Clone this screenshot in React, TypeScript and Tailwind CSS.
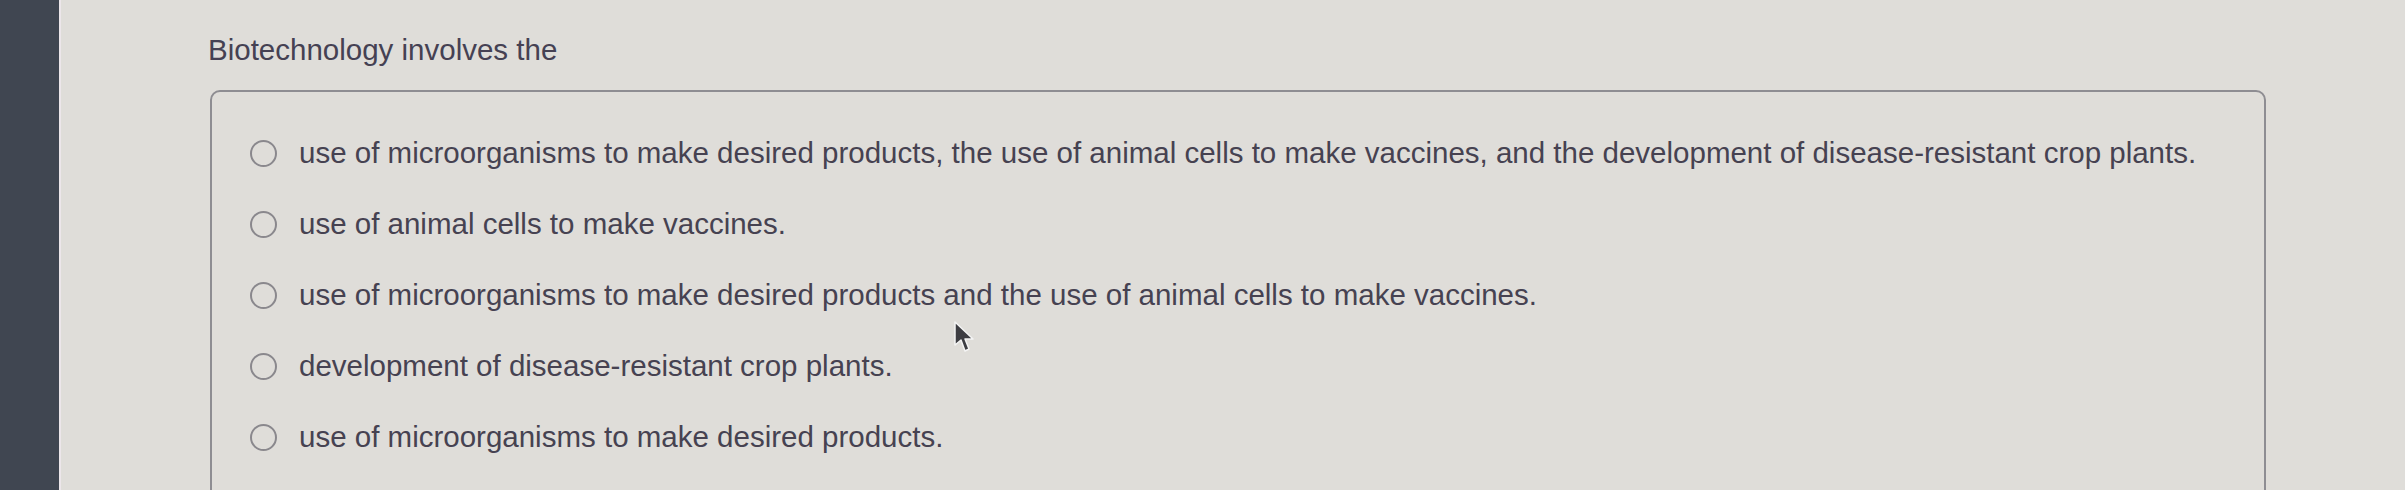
import React from 'react';

const options = [
  'use of microorganisms to make desired products, the use of animal cells to make vaccines, and the development of disease-resistant crop plants.',
  'use of animal cells to make vaccines.',
  'use of microorganisms to make desired products and the use of animal cells to make vaccines.',
  'development of disease-resistant crop plants.',
  'use of microorganisms to make desired products.',
];

export default function App() {
  return (
    <div
      className="relative flex h-[490px] w-[2405px] overflow-hidden bg-[#dfddd9]"
      style={{ fontFamily: '"Liberation Sans", Arial, sans-serif' }}
    >
      {/* dark side strip */}
      <div className="w-[61px] shrink-0 bg-[#404651] border-r-2 border-[#ece6ea]" />

      {/* question */}
      <div className="flex-1 pl-[147px] pt-[35px]">
        <h2 className="text-[29.5px] leading-none text-[#454153]">Biotechnology involves the</h2>

        <div className="mt-[25px] ml-[2px] w-[2056px] h-[500px] rounded-[10px] border-2 border-[#8e8d92] pt-[26px]">
          {options.map((opt) => (
            <label key={opt} className="flex h-[71px] items-center pl-[38px] cursor-pointer">
              <span className="h-[27px] w-[27px] shrink-0 rounded-full border-2 border-[#8a888d]" />
              <span className="ml-[22px] text-[29.5px] leading-none text-[#464251]">{opt}</span>
            </label>
          ))}
        </div>
      </div>

      {/* mouse pointer */}
      <svg className="absolute left-[953px] top-[320px]" width="24" height="34" viewBox="0 0 24 34">
        <path
          d="M2 2 L2 25 L8 20 L12 31 L16 29 L12 19 L20 19 Z"
          fill="#3d3d42"
          stroke="#f4f4f4"
          strokeWidth="1.5"
          strokeLinejoin="round"
        />
      </svg>
    </div>
  );
}
